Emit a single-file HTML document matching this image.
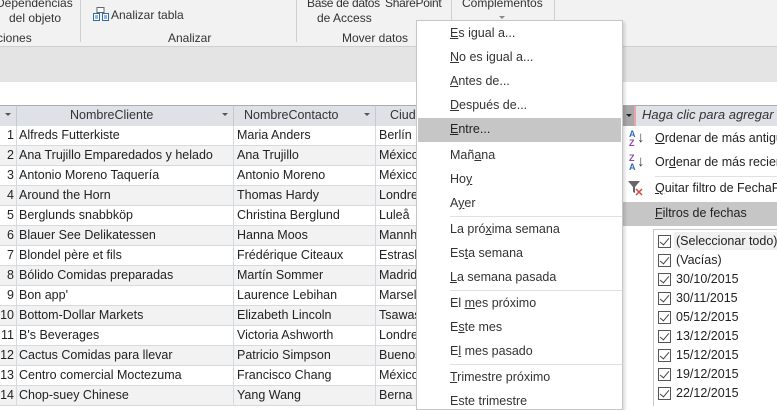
<!DOCTYPE html>
<html><head><meta charset="utf-8"><style>
*{margin:0;padding:0;box-sizing:border-box}
body{width:777px;height:406px;overflow:hidden;position:relative;background:#fff;font-family:"Liberation Sans",sans-serif;font-size:12.5px;color:#222}
.a{position:absolute;white-space:nowrap}
.rib{position:absolute;left:0;top:0;width:777px;height:47px;background:#f2f2f2;border-bottom:1px solid #cfcfcf;color:#333;font-size:12px}
.vs{position:absolute;width:1px;background:#cfcfcf}
.band{position:absolute;left:0;top:47px;width:777px;height:35px;background:#e4e4e4}
.hdr{position:absolute;top:105px;height:21px;background:#dee1e6;border-top:1px solid #a9adb3;border-right:1px solid #c5cad0;color:#333}
.row{position:absolute;left:0;width:420px;height:20px;border-bottom:1px solid #d5dae0}
.row span{position:absolute;top:2px;white-space:nowrap}
.dd{position:absolute;top:7px;width:0;height:0;border-left:3px solid transparent;border-right:3px solid transparent;border-top:3px solid #555}
.menu{position:absolute;left:416px;top:20px;width:207px;height:390px;background:#fff;border:1px solid #c6c6c6;box-shadow:2px 2px 3px rgba(0,0,0,.15)}
.mi{position:absolute;left:450px;color:#333}
.sep{position:absolute;left:450px;width:172px;height:1px;background:#e0e0e0}
u{text-decoration:underline}
.cb{position:absolute;left:658px;width:13px;height:13px;border:1px solid #555;background:#fff}
.cb:after{content:"";position:absolute;left:3px;top:0px;width:4px;height:8px;border-right:1.5px solid #444;border-bottom:1.5px solid #444;transform:rotate(40deg)}
.ci{position:absolute;left:676px;color:#222;white-space:nowrap}
</style></head><body>
<div class="rib">
<div class="a" style="left:-4px;top:-4px">Dependencias</div>
<div class="a" style="left:9px;top:11px">del objeto</div>
<div class="a" style="left:-3px;top:31px">ciones</div>
<div class="vs" style="left:80px;top:0;height:42px"></div>
<svg class="a" style="left:93px;top:7px" width="16" height="14" viewBox="0 0 16 14"><rect x="4" y="0.5" width="7" height="5" fill="#fff" stroke="#666"/><rect x="0.5" y="6.5" width="6" height="7" fill="#fff" stroke="#2b6cb0"/><rect x="9.5" y="6.5" width="6" height="7" fill="#fff" stroke="#2b6cb0"/><path d="M2 9h3M2 11h3M11 9h3M11 11h3" stroke="#2b6cb0"/></svg>
<div class="a" style="left:111px;top:8px">Analizar tabla</div>
<div class="a" style="left:168px;top:31px">Analizar</div>
<div class="vs" style="left:296px;top:0;height:42px"></div>
<div class="a" style="left:307px;top:-4px;letter-spacing:-0.3px">Base de datos</div>
<div class="a" style="left:317px;top:11px">de Access</div>
<div class="a" style="left:385px;top:-4px;letter-spacing:-0.3px">SharePoint</div>
<div class="a" style="left:342px;top:31px">Mover datos</div>
<div class="vs" style="left:451px;top:0;height:42px"></div>
<div class="a" style="left:462px;top:-4px">Complementos</div>
<div class="dd" style="left:499px;top:16px;border-top-color:#888"></div>
<div class="vs" style="left:554px;top:0;height:42px"></div>
</div>
<div class="band"></div>

<div class="hdr" style="left:0;width:17px"><div class="dd" style="left:5px"></div></div>
<div class="hdr" style="left:17px;width:217px"><span class="a" style="left:53px;top:2px">NombreCliente</span><div class="dd" style="left:205px"></div></div>
<div class="hdr" style="left:234px;width:142px"><span class="a" style="left:10px;top:2px">NombreContacto</span><div class="dd" style="left:130px"></div></div>
<div class="hdr" style="left:376px;width:60px"><span class="a" style="left:14px;top:2px">Ciudad</span></div>

<div class="row" style="top:126px;background:#fff"><span style="right:406px">1</span><span style="left:19px">Alfreds Futterkiste</span><span style="left:237px">Maria Anders</span><span style="left:379px">Berlín</span></div>
<div class="row" style="top:146px;background:#f2f2f2"><span style="right:406px">2</span><span style="left:19px">Ana Trujillo Emparedados y helado</span><span style="left:237px">Ana Trujillo</span><span style="left:379px">México</span></div>
<div class="row" style="top:166px;background:#fff"><span style="right:406px">3</span><span style="left:19px">Antonio Moreno Taquería</span><span style="left:237px">Antonio Moreno</span><span style="left:379px">México</span></div>
<div class="row" style="top:186px;background:#f2f2f2"><span style="right:406px">4</span><span style="left:19px">Around the Horn</span><span style="left:237px">Thomas Hardy</span><span style="left:379px">Londres</span></div>
<div class="row" style="top:206px;background:#fff"><span style="right:406px">5</span><span style="left:19px">Berglunds snabbköp</span><span style="left:237px">Christina Berglund</span><span style="left:379px">Luleå</span></div>
<div class="row" style="top:226px;background:#f2f2f2"><span style="right:406px">6</span><span style="left:19px">Blauer See Delikatessen</span><span style="left:237px">Hanna Moos</span><span style="left:379px">Mannheim</span></div>
<div class="row" style="top:246px;background:#fff"><span style="right:406px">7</span><span style="left:19px">Blondel père et fils</span><span style="left:237px">Frédérique Citeaux</span><span style="left:379px">Estrasburgo</span></div>
<div class="row" style="top:266px;background:#f2f2f2"><span style="right:406px">8</span><span style="left:19px">Bólido Comidas preparadas</span><span style="left:237px">Martín Sommer</span><span style="left:379px">Madrid</span></div>
<div class="row" style="top:286px;background:#fff"><span style="right:406px">9</span><span style="left:19px">Bon app'</span><span style="left:237px">Laurence Lebihan</span><span style="left:379px">Marsella</span></div>
<div class="row" style="top:306px;background:#f2f2f2"><span style="right:406px">10</span><span style="left:19px">Bottom-Dollar Markets</span><span style="left:237px">Elizabeth Lincoln</span><span style="left:379px">Tsawassen</span></div>
<div class="row" style="top:326px;background:#fff"><span style="right:406px">11</span><span style="left:19px">B's Beverages</span><span style="left:237px">Victoria Ashworth</span><span style="left:379px">Londres</span></div>
<div class="row" style="top:346px;background:#f2f2f2"><span style="right:406px">12</span><span style="left:19px">Cactus Comidas para llevar</span><span style="left:237px">Patricio Simpson</span><span style="left:379px">Buenos</span></div>
<div class="row" style="top:366px;background:#fff"><span style="right:406px">13</span><span style="left:19px">Centro comercial Moctezuma</span><span style="left:237px">Francisco Chang</span><span style="left:379px">México</span></div>
<div class="row" style="top:386px;background:#f2f2f2"><span style="right:406px">14</span><span style="left:19px">Chop-suey Chinese</span><span style="left:237px">Yang Wang</span><span style="left:379px">Berna</span></div>
<div class="vs" style="left:16px;top:126px;height:280px;background:#d5dae0"></div>
<div class="vs" style="left:233px;top:126px;height:280px;background:#d5dae0"></div>
<div class="vs" style="left:375px;top:126px;height:280px;background:#d5dae0"></div>

<div class="a" style="left:622px;top:105px;width:155px;height:21px;background:#dee1e6;border-top:1px solid #a9adb3"></div>
<div class="a" style="left:622px;top:106px;width:14px;height:20px;background:#a8a8a8;border-right:2px solid #f0a0a8"></div>
<div class="dd" style="left:626px;top:114px;border-top-color:#222"></div>
<div class="a" style="left:642px;top:107px;font-style:italic;color:#333;font-size:13px">Haga clic para agregar</div>

<div class="a" style="left:622px;top:126px;width:155px;height:280px;background:#fff;border-left:1px solid #c6c6c6"></div>
<div class="a" style="left:629px;top:130px;font-size:9px;line-height:9px;color:#2b6cb0;font-weight:bold">A<br><span style="color:#8e44ad">Z</span></div>
<div class="a" style="left:637px;top:129px;font-size:15px;color:#444">↓</div>
<div class="a" style="left:655px;top:131px"><u>O</u>rdenar de más antiguo</div>
<div class="a" style="left:629px;top:154px;font-size:9px;line-height:9px;color:#8e44ad;font-weight:bold">Z<br><span style="color:#2b6cb0">A</span></div>
<div class="a" style="left:637px;top:153px;font-size:15px;color:#444">↓</div>
<div class="a" style="left:655px;top:155px">Or<u>d</u>enar de más reciente</div>
<div class="sep" style="left:655px;top:176px;width:122px"></div>
<svg class="a" style="left:628px;top:180px" width="16" height="16" viewBox="0 0 16 16"><path d="M0 1h12L7 7v6L5 12V7z" fill="#666"/><path d="M8 9l6 6M14 9l-6 6" stroke="#e0443a" stroke-width="1.5"/></svg>
<div class="a" style="left:655px;top:181px"><u>Q</u>uitar filtro de FechaFactura</div>
<div class="a" style="left:622px;top:202px;width:155px;height:24px;background:#c6c6c6"></div>
<div class="a" style="left:655px;top:206px;color:#222"><u>F</u>iltros de fechas</div>
<div class="a" style="left:653px;top:229px;width:124px;height:177px;border:1px solid #c8c8c8;border-right:none;border-bottom:none"></div>
<div class="a" style="left:674px;top:232px;width:103px;height:18px;background:#f0f0f0"></div>
<div class="cb" style="top:235px"></div><div class="ci" style="top:234px">(Seleccionar todo)</div>
<div class="cb" style="top:254px"></div><div class="ci" style="top:253px">(Vacías)</div>
<div class="cb" style="top:273px"></div><div class="ci" style="top:272px">30/10/2015</div>
<div class="cb" style="top:292px"></div><div class="ci" style="top:291px">30/11/2015</div>
<div class="cb" style="top:311px"></div><div class="ci" style="top:310px">05/12/2015</div>
<div class="cb" style="top:330px"></div><div class="ci" style="top:329px">13/12/2015</div>
<div class="cb" style="top:349px"></div><div class="ci" style="top:348px">15/12/2015</div>
<div class="cb" style="top:368px"></div><div class="ci" style="top:367px">19/12/2015</div>
<div class="cb" style="top:387px"></div><div class="ci" style="top:386px">22/12/2015</div>

<div class="menu"></div>
<div class="a" style="left:418px;top:118px;width:203px;height:24px;background:#c6c6c6"></div>
<div class="mi a" style="top:26px"><u>E</u>s igual a...</div>
<div class="mi a" style="top:50px"><u>N</u>o es igual a...</div>
<div class="mi a" style="top:74px"><u>A</u>ntes de...</div>
<div class="mi a" style="top:98px"><u>D</u>espués de...</div>
<div class="mi a" style="top:122px;color:#222"><u>E</u>ntre...</div>
<div class="mi a" style="top:148px">Mañ<u>a</u>na</div>
<div class="mi a" style="top:172px">Ho<u>y</u></div>
<div class="mi a" style="top:196px">A<u>y</u>er</div>
<div class="sep" style="top:216px"></div>
<div class="mi a" style="top:222px">La pró<u>x</u>ima semana</div>
<div class="mi a" style="top:246px">Es<u>t</u>a semana</div>
<div class="mi a" style="top:270px"><u>L</u>a semana pasada</div>
<div class="sep" style="top:290px"></div>
<div class="mi a" style="top:296px">El <u>m</u>es próximo</div>
<div class="mi a" style="top:320px">E<u>s</u>te mes</div>
<div class="mi a" style="top:344px">E<u>l</u> mes pasado</div>
<div class="sep" style="top:364px"></div>
<div class="mi a" style="top:370px"><u>T</u>rimestre próximo</div>
<div class="mi a" style="top:394px">Este trimestre</div>
</body></html>
